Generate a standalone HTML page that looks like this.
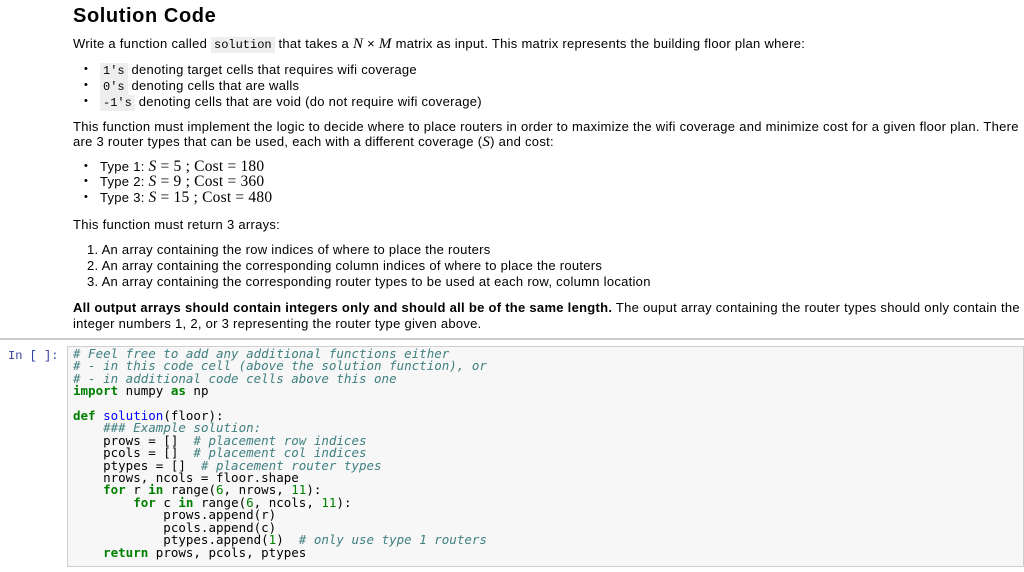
<!DOCTYPE html>
<html><head><meta charset="utf-8"><style>
body{margin:0;width:1024px;height:572px;background:#fff;overflow:hidden;position:relative;font-family:"Liberation Sans",Arial,sans-serif;color:#000;}
.l{position:absolute;left:73px;white-space:nowrap;font-size:13px;letter-spacing:0.28px;line-height:14px;}
.b{left:100px}
.dot{position:absolute;left:84px;font-size:11px;}
code{font-family:"Liberation Mono",monospace;font-size:12px;letter-spacing:0;background:#eee;padding:1px 3px;}
i.m{font-family:"Liberation Serif",serif;font-size:15px;}
.mm{font-family:'Liberation Serif',serif;font-size:15.5px;letter-spacing:0.2px}
h1{position:absolute;left:73px;top:5px;margin:0;font-size:20px;letter-spacing:0.6px;font-weight:bold;}
.sep{position:absolute;left:0;right:0;top:338px;border-top:2px solid #ccc;}
.prompt{position:absolute;left:8px;top:349px;font-family:"Liberation Mono",monospace;font-size:12px;color:#303f9f;}
.cell{position:absolute;left:67px;top:346px;width:955px;height:219px;background:#f7f7f7;border:1px solid #cfcfcf;}
pre{position:absolute;left:73px;top:348px;margin:0;font-family:"DejaVu Sans Mono","Liberation Mono",monospace;font-size:12.5px;line-height:12.4px;color:#000;}
.c{color:#408080;font-style:italic}.k{color:#008000;font-weight:bold}.f{color:#0000ff}.n{color:#008000}
</style></head><body>
<h1>Solution Code</h1>
<div class="l" style="top:37px">Write a function called <code>solution</code> that takes a <i class="m">N</i> × <i class="m">M</i> matrix as input. This matrix represents the building floor plan where:</div>
<div class="dot" style="top:63px">•</div><div class="l b" style="top:63px"><code>1's</code> denoting target cells that requires wifi coverage</div>
<div class="dot" style="top:79px">•</div><div class="l b" style="top:79px"><code>0's</code> denoting cells that are walls</div>
<div class="dot" style="top:95px">•</div><div class="l b" style="top:95px"><code>-1's</code> denoting cells that are void (do not require wifi coverage)</div>
<div class="l" style="top:120px">This function must implement the logic to decide where to place routers in order to maximize the wifi coverage and minimize cost for a given floor plan. There</div>
<div class="l" style="top:135px">are 3 router types that can be used, each with a different coverage (<i class="m">S</i>) and cost:</div>
<div class="dot" style="top:160px">•</div><div class="l b" style="top:160px">Type 1: <span class="mm"><i>S</i> = 5 ; Cost = 180</span></div>
<div class="dot" style="top:175px">•</div><div class="l b" style="top:175px">Type 2: <span class="mm"><i>S</i> = 9 ; Cost = 360</span></div>
<div class="dot" style="top:191px">•</div><div class="l b" style="top:191px">Type 3: <span class="mm"><i>S</i> = 15 ; Cost = 480</span></div>
<div class="l" style="top:218px">This function must return 3 arrays:</div>
<div class="l" style="top:243px;left:87px">1. An array containing the row indices of where to place the routers</div>
<div class="l" style="top:259px;left:87px">2. An array containing the corresponding column indices of where to place the routers</div>
<div class="l" style="top:275px;left:87px">3. An array containing the corresponding router types to be used at each row, column location</div>
<div class="l" style="top:301px"><b>All output arrays should contain integers only and should all be of the same length.</b> The ouput array containing the router types should only contain the</div>
<div class="l" style="top:317px">integer numbers 1, 2, or 3 representing the router type given above.</div>
<div class="sep"></div>
<div class="prompt">In [ ]:</div>
<div class="cell"></div>
<pre><span class="c"># Feel free to add any additional functions either
# - in this code cell (above the solution function), or
# - in additional code cells above this one</span>
<span class="k">import</span> numpy <span class="k">as</span> np

<span class="k">def</span> <span class="f">solution</span>(floor):
    <span class="c">### Example solution:</span>
    prows = []  <span class="c"># placement row indices</span>
    pcols = []  <span class="c"># placement col indices</span>
    ptypes = []  <span class="c"># placement router types</span>
    nrows, ncols = floor.shape
    <span class="k">for</span> r <span class="k">in</span> range(<span class="n">6</span>, nrows, <span class="n">11</span>):
        <span class="k">for</span> c <span class="k">in</span> range(<span class="n">6</span>, ncols, <span class="n">11</span>):
            prows.append(r)
            pcols.append(c)
            ptypes.append(<span class="n">1</span>)  <span class="c"># only use type 1 routers</span>
    <span class="k">return</span> prows, pcols, ptypes</pre>
</body></html>
